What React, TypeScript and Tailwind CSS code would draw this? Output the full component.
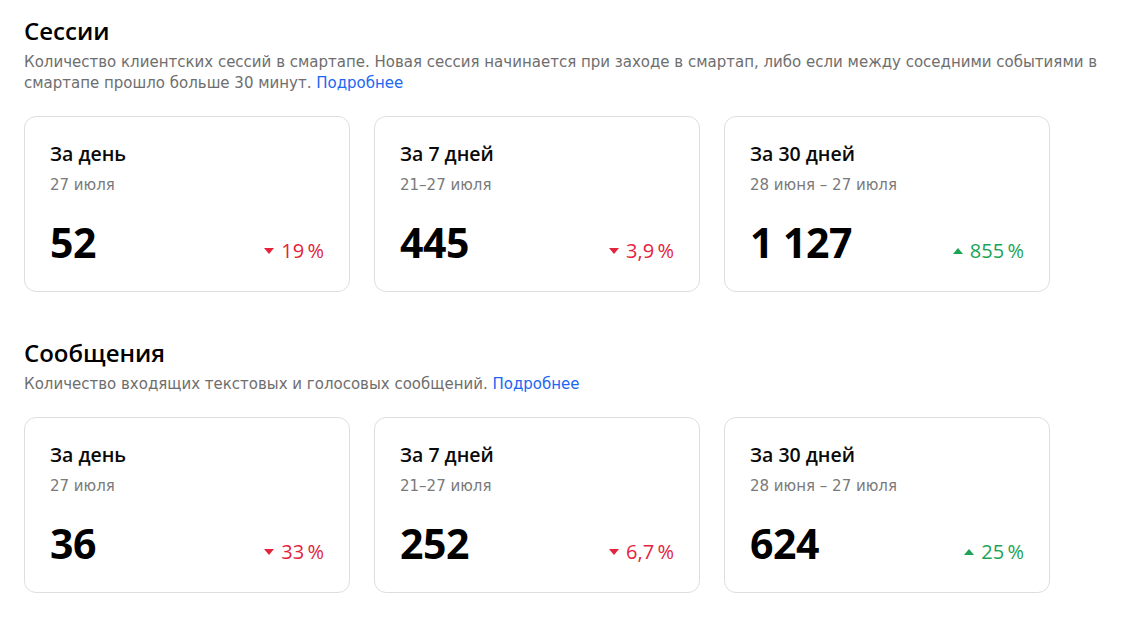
import React from 'react';

interface Stat {
  title: string;
  period: string;
  value: string;
  delta: string;
  up: boolean;
}

interface Section {
  title: string;
  description: string;
  stats: Stat[];
}

const sections: Section[] = [
  {
    title: 'Сессии',
    description:
      'Количество клиентских сессий в смартапе. Новая сессия начинается при заходе в смартап, либо если между соседними событиями в смартапе прошло больше 30 минут.',
    stats: [
      { title: 'За день', period: '27 июля', value: '52', delta: '19\u2009%', up: false },
      { title: 'За 7 дней', period: '21–27 июля', value: '445', delta: '3,9\u2009%', up: false },
      { title: 'За 30 дней', period: '28 июня – 27 июля', value: '1 127', delta: '855\u2009%', up: true },
    ],
  },
  {
    title: 'Сообщения',
    description: 'Количество входящих текстовых и голосовых сообщений.',
    stats: [
      { title: 'За день', period: '27 июля', value: '36', delta: '33\u2009%', up: false },
      { title: 'За 7 дней', period: '21–27 июля', value: '252', delta: '6,7\u2009%', up: false },
      { title: 'За 30 дней', period: '28 июня – 27 июля', value: '624', delta: '25\u2009%', up: true },
    ],
  },
];

const Triangle: React.FC<{ up: boolean }> = ({ up }) => (
  <svg width="10" height="6" viewBox="0 0 10 6" className="mr-[7px] self-center">
    {up ? <path d="M5 0 L10 6 L0 6 Z" fill="currentColor" /> : <path d="M0 0 L10 0 L5 6 Z" fill="currentColor" />}
  </svg>
);

const StatCard: React.FC<{ stat: Stat }> = ({ stat }) => (
  <div className="w-[326px] h-[176px] rounded-[12px] border border-[#dedede] bg-white pl-[25px] pr-[25px] pt-[24px]">
    <div className="text-[19.5px] leading-[26px] font-semibold text-[#0a0a0a] font-['Open_Sans',sans-serif]">{stat.title}</div>
    <div className="mt-[8px] text-[15px] leading-[20px] text-[#7a7a7a] font-['DejaVu_Sans',sans-serif]">{stat.period}</div>
    <div className="mt-[21px] flex items-baseline justify-between">
      <div className="text-[41px] leading-[52px] font-bold text-black font-['Open_Sans',sans-serif] tracking-[-0.5px]">{stat.value}</div>
      <div
        className={`flex items-baseline text-[20px] leading-[24px] font-['Open_Sans',sans-serif] ${
          stat.up ? 'text-[#1ba356]' : 'text-[#e3243c]'
        }`}
      >
        <Triangle up={stat.up} />
        <span>{stat.delta}</span>
      </div>
    </div>
  </div>
);

export default function App() {
  return (
    <div className="min-h-screen bg-white px-[24px] pt-[15px]">
      {sections.map((section, i) => (
        <section key={section.title} className={i > 0 ? 'mt-[45px]' : ''}>
          <h2 className="text-[24px] leading-[32px] font-semibold text-black font-['Open_Sans',sans-serif]">{section.title}</h2>
          <p className="mt-[5px] text-[15px] leading-[21px] text-[#6e6e6e] font-['DejaVu_Sans',sans-serif] max-w-[1090px]">
            {section.description}{' '}
            <a href="#" className="text-[#2166f3]">
              Подробнее
            </a>
          </p>
          <div className="mt-[22px] flex gap-[24px]">
            {section.stats.map((stat) => (
              <StatCard key={stat.title} stat={stat} />
            ))}
          </div>
        </section>
      ))}
    </div>
  );
}
